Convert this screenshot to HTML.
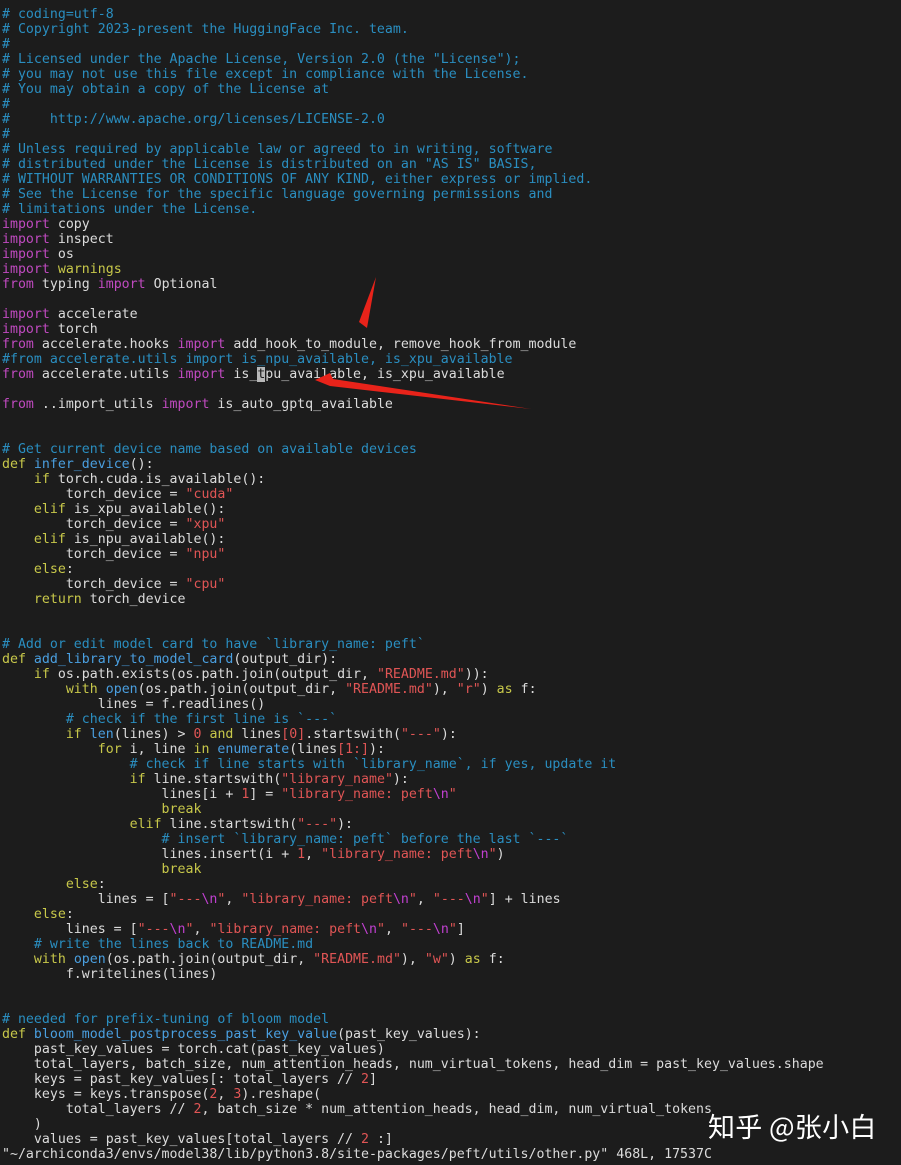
<!DOCTYPE html>
<html><head><meta charset="utf-8"><style>
html,body{margin:0;padding:0;background:#1c1c1c;width:901px;height:1165px;overflow:hidden;position:relative}
pre{margin:0;position:absolute;left:2px;top:7px;font-family:"DejaVu Sans Mono","Liberation Mono",monospace;font-size:13.25px;line-height:15px;color:#dcdcdc;letter-spacing:0}
.c{color:#2a8ec0}.k{color:#c8c84a}.f{color:#4a9fe0}.m{color:#c04ac0}.s{color:#e05555}.e{color:#c040d0}
.cur{background:#b8b8b8;color:#1c1c1c}
.wm{position:absolute;left:708px;top:1108px;font-family:"Noto Sans CJK SC",sans-serif;font-size:27px;color:#fff;line-height:36px;letter-spacing:0.3px}
</style></head><body>
<pre><span class="c"># coding=utf-8
# Copyright 2023-present the HuggingFace Inc. team.
#
# Licensed under the Apache License, Version 2.0 (the "License");
# you may not use this file except in compliance with the License.
# You may obtain a copy of the License at
#
#     http://www.apache.org/licenses/LICENSE-2.0
#
# Unless required by applicable law or agreed to in writing, software
# distributed under the License is distributed on an "AS IS" BASIS,
# WITHOUT WARRANTIES OR CONDITIONS OF ANY KIND, either express or implied.
# See the License for the specific language governing permissions and
# limitations under the License.</span>
<span class="m">import</span> copy
<span class="m">import</span> inspect
<span class="m">import</span> os
<span class="m">import</span> <span class="k">warnings</span>
<span class="m">from</span> typing <span class="m">import</span> Optional

<span class="m">import</span> accelerate
<span class="m">import</span> torch
<span class="m">from</span> accelerate.hooks <span class="m">import</span> add_hook_to_module, remove_hook_from_module
<span class="c">#from accelerate.utils import is_npu_available, is_xpu_available</span>
<span class="m">from</span> accelerate.utils <span class="m">import</span> is_<span class="cur">t</span>pu_available, is_xpu_available

<span class="m">from</span> ..import_utils <span class="m">import</span> is_auto_gptq_available


<span class="c"># Get current device name based on available devices</span>
<span class="k">def</span> <span class="f">infer_device</span>():
    <span class="k">if</span> torch.cuda.is_available():
        torch_device = <span class="s">"cuda"</span>
    <span class="k">elif</span> is_xpu_available():
        torch_device = <span class="s">"xpu"</span>
    <span class="k">elif</span> is_npu_available():
        torch_device = <span class="s">"npu"</span>
    <span class="k">else</span>:
        torch_device = <span class="s">"cpu"</span>
    <span class="k">return</span> torch_device


<span class="c"># Add or edit model card to have `library_name: peft`</span>
<span class="k">def</span> <span class="f">add_library_to_model_card</span>(output_dir):
    <span class="k">if</span> os.path.exists(os.path.join(output_dir, <span class="s">"README.md"</span>)):
        <span class="k">with</span> <span class="f">open</span>(os.path.join(output_dir, <span class="s">"README.md"</span>), <span class="s">"r"</span>) <span class="k">as</span> f:
            lines = f.readlines()
        <span class="c"># check if the first line is `---`</span>
        <span class="k">if</span> <span class="f">len</span>(lines) &gt; <span class="s">0</span> <span class="k">and</span> lines<span class="s">[0]</span>.startswith(<span class="s">"---"</span>):
            <span class="k">for</span> i, line <span class="k">in</span> <span class="f">enumerate</span>(lines<span class="s">[1:]</span>):
                <span class="c"># check if line starts with `library_name`, if yes, update it</span>
                <span class="k">if</span> line.startswith(<span class="s">"library_name"</span>):
                    lines[i + <span class="s">1</span>] = <span class="s">"library_name: peft<span class="e">\n</span>"</span>
                    <span class="k">break</span>
                <span class="k">elif</span> line.startswith(<span class="s">"---"</span>):
                    <span class="c"># insert `library_name: peft` before the last `---`</span>
                    lines.insert(i + <span class="s">1</span>, <span class="s">"library_name: peft<span class="e">\n</span>"</span>)
                    <span class="k">break</span>
        <span class="k">else</span>:
            lines = [<span class="s">"---<span class="e">\n</span>"</span>, <span class="s">"library_name: peft<span class="e">\n</span>"</span>, <span class="s">"---<span class="e">\n</span>"</span>] + lines
    <span class="k">else</span>:
        lines = [<span class="s">"---<span class="e">\n</span>"</span>, <span class="s">"library_name: peft<span class="e">\n</span>"</span>, <span class="s">"---<span class="e">\n</span>"</span>]
    <span class="c"># write the lines back to README.md</span>
    <span class="k">with</span> <span class="f">open</span>(os.path.join(output_dir, <span class="s">"README.md"</span>), <span class="s">"w"</span>) <span class="k">as</span> f:
        f.writelines(lines)


<span class="c"># needed for prefix-tuning of bloom model</span>
<span class="k">def</span> <span class="f">bloom_model_postprocess_past_key_value</span>(past_key_values):
    past_key_values = torch.cat(past_key_values)
    total_layers, batch_size, num_attention_heads, num_virtual_tokens, head_dim = past_key_values.shape
    keys = past_key_values[: total_layers // <span class="s">2</span>]
    keys = keys.transpose(<span class="s">2</span>, <span class="s">3</span>).reshape(
        total_layers // <span class="s">2</span>, batch_size * num_attention_heads, head_dim, num_virtual_tokens
    )
    values = past_key_values[total_layers // <span class="s">2</span> :]
"~/archiconda3/envs/model38/lib/python3.8/site-packages/peft/utils/other.py" 468L, 17537C</pre>
<svg width="901" height="1165" style="position:absolute;left:0;top:0">
<polygon points="376,277 367,328 359,322" fill="#e8231a"/>
<polygon points="531,409 330,386 315,380 330,373 333,379" fill="#e8231a"/>
</svg>
<div class="wm">知乎 @张小白</div>
</body></html>
